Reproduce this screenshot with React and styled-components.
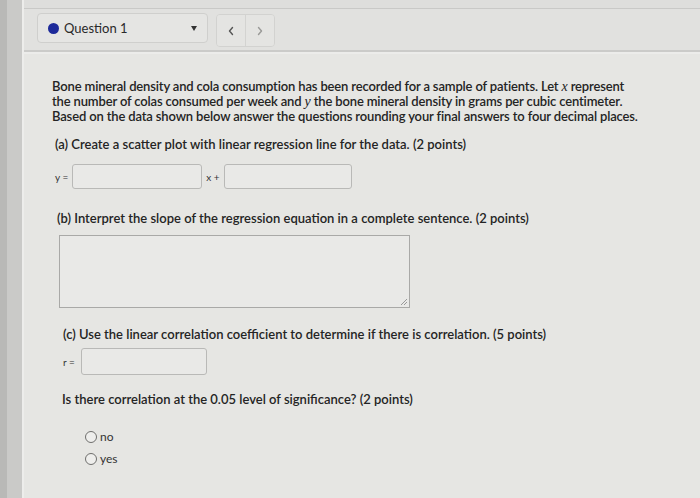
import React from "react";
import styled, { createGlobalStyle } from "styled-components";

const GlobalStyle = createGlobalStyle`
  html, body {
    margin: 0;
    padding: 0;
    background: #c6c6c4;
  }
  body {
    font-family: Lato, "Open Sans", "Liberation Sans", sans-serif;
  }
`;

const Frame = styled.div`
  display: flex;
  width: 700px;
  height: 498px;
  overflow: hidden;
`;

const Gutter = styled.div`
  width: 22px;
  flex: none;
  background: linear-gradient(90deg, #b9b9b7 0, #b9b9b7 7px, #cacac8 7px);
`;

const Page = styled.div`
  flex: 1;
  display: flex;
  flex-direction: column;
  background: #e6e6e3;
  border-left: 2px solid #ededeb;
`;

const TopStrip = styled.div`
  height: 8px;
  background: #dededc;
  border-bottom: 1px solid #c9c9c7;
`;

const Toolbar = styled.div`
  display: flex;
  align-items: flex-start;
  gap: 8px;
  padding: 4px 0 0 13px;
  height: 37px;
  background: #e1e1df;
  border-bottom: 2px solid #cbcbc9;
  box-shadow: 0 2px 0 #ececea;
`;

const Select = styled.div`
  display: flex;
  align-items: center;
  width: 171px;
  height: 30px;
  box-sizing: border-box;
  padding: 0 10px;
  border: 1px solid #cfcfcd;
  border-radius: 4px;
  background: #e5e5e3;
  font-size: 13px;
  color: #2a2a2a;
`;

const Dot = styled.span`
  width: 11px;
  height: 11px;
  border-radius: 50%;
  background: #1d2a9a;
  margin-right: 5px;
`;

const Caret = styled.span`
  margin-left: auto;
  width: 0;
  height: 0;
  border-left: 3.5px solid transparent;
  border-right: 3.5px solid transparent;
  border-top: 5px solid #333;
`;

const NavGroup = styled.div`
  display: flex;
  height: 31px;
  margin-top: 1px;
  border: 1px solid #d2d2d0;
  border-radius: 4px;
  overflow: hidden;
`;

const NavButton = styled.div`
  width: 28px;
  display: flex;
  align-items: center;
  justify-content: center;
  background: #e4e4e2;
  & + & {
    border-left: 1px solid #d3d3d1;
  }
`;

const Content = styled.div`
  padding: 27px 0 0 28px;
  color: #242424;
  font-size: 13px;
`;

const Intro = styled.div`
  line-height: 15px;
  font-weight: 600;
  white-space: nowrap;
  letter-spacing: -0.15px;
`;

const MathVar = styled.i`
  font-family: "Liberation Serif", serif;
  font-weight: 400;
  font-size: 14px;
`;

const Prompt = styled.div`
  margin: ${(p) => p.$m || "0"};
  font-weight: 600;
  line-height: 16px;
`;

const Row = styled.div`
  display: flex;
  align-items: center;
  gap: ${(p) => p.$gap || "4px"};
  margin: ${(p) => p.$m || "0"};
`;

const Small = styled.span`
  font-size: 10px;
  color: #333;
`;

const Box = styled.div`
  width: ${(p) => p.$w}px;
  height: ${(p) => p.$h || 25}px;
  box-sizing: border-box;
  border: 1px solid #b9b9b7;
  border-radius: 3px;
  background: #e9e9e7;
`;

const TextArea = styled.div`
  position: relative;
  width: 351px;
  height: 73px;
  box-sizing: border-box;
  border: 1px solid #a9a9a7;
  background: #e9e9e7;
  margin: 9px 0 0 7px;
`;

const Grip = styled.svg`
  position: absolute;
  right: 1px;
  bottom: 1px;
`;

const Radio = styled.label`
  display: flex;
  align-items: center;
  gap: 3px;
  font-size: 12px;
  color: #333;
  margin: ${(p) => p.$m || "0"};
`;

const Circle = styled.span`
  width: 10px;
  height: 10px;
  border-radius: 50%;
  border: 1px solid #6f6f6d;
  background: #eeeeec;
`;

const Chevron = ({ dir, color }) => (
  <svg width="8" height="10" viewBox="0 0 8 10">
    <path
      d={dir === "left" ? "M5.5 1.5L2.5 5l3 3.5" : "M2.5 1.5L5.5 5l-3 3.5"}
      fill="none"
      stroke={color}
      strokeWidth="1.4"
      strokeLinecap="round"
      strokeLinejoin="round"
    />
  </svg>
);

export default function App() {
  return (
    <>
      <GlobalStyle />
      <Frame>
        <Gutter />
        <Page>
          <TopStrip />
          <Toolbar>
            <Select>
              <Dot />
              Question 1
              <Caret />
            </Select>
            <NavGroup>
              <NavButton>
                <Chevron dir="left" color="#555" />
              </NavButton>
              <NavButton>
                <Chevron dir="right" color="#9a9a98" />
              </NavButton>
            </NavGroup>
          </Toolbar>
          <Content>
            <Intro>
              <div>
                Bone mineral density and cola consumption has been recorded for a
                sample of patients. Let <MathVar>x</MathVar> represent
              </div>
              <div>
                the number of colas consumed per week and <MathVar>y</MathVar> the
                bone mineral density in grams per cubic centimeter.
              </div>
              <div>
                Based on the data shown below answer the questions rounding your
                final answers to four decimal places.
              </div>
            </Intro>
            <Prompt $m="12px 0 0 3px">
              (a) Create a scatter plot with linear regression line for the data. (2 points)
            </Prompt>
            <Row $m="12px 0 0 3px">
              <Small>y =</Small>
              <Box $w={130} />
              <Small>x +</Small>
              <Box $w={128} />
            </Row>
            <Prompt $m="21px 0 0 5px">
              (b) Interpret the slope of the regression equation in a complete sentence. (2 points)
            </Prompt>
            <TextArea>
              <Grip width="8" height="8" viewBox="0 0 8 8">
                <path d="M7 1L1 7M7 4L4 7" stroke="#999" strokeWidth="1" />
              </Grip>
            </TextArea>
            <Prompt $m="18px 0 0 11px">
              (c) Use the linear correlation coefficient to determine if there is correlation. (5 points)
            </Prompt>
            <Row $m="6px 0 0 11px" $gap="6px">
              <Small>r =</Small>
              <Box $w={126} $h={27} />
            </Row>
            <Prompt $m="16px 0 0 10px">
              Is there correlation at the 0.05 level of significance? (2 points)
            </Prompt>
            <Radio $m="22px 0 0 33px">
              <Circle />
              no
            </Radio>
            <Radio $m="7px 0 0 33px">
              <Circle />
              yes
            </Radio>
          </Content>
        </Page>
      </Frame>
    </>
  );
}
